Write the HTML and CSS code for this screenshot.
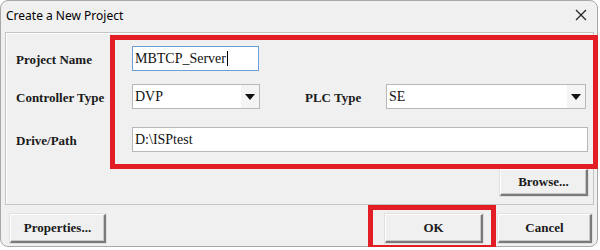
FILE: index.html
```html
<!DOCTYPE html>
<html>
<head>
<meta charset="utf-8">
<link rel="stylesheet" href="styles.css">
</head>
<body>
<div class="window">
  <div class="titlebar">
    <span class="title">Create a New Project</span>
    <svg class="close" width="12" height="12" viewBox="0 0 12 12"><path d="M1 1L11 11M11 1L1 11" stroke="#222" stroke-width="1.2" fill="none"/></svg>
  </div>
  <div class="group">
    <div class="row row1">
      <div class="label">Project Name</div>
      <div class="textbox focus name">MBTCP_Server<span class="caret"></span></div>
    </div>
    <div class="row row2">
      <div class="label">Controller Type</div>
      <div class="combo ctype"><span class="val">DVP</span><span class="drop"><span class="tri"></span></span></div>
      <div class="label plc">PLC Type</div>
      <div class="combo ptype"><span class="val">SE</span><span class="drop"><span class="tri"></span></span></div>
    </div>
    <div class="row row3">
      <div class="label">Drive/Path</div>
      <div class="textbox path">D:\ISPtest</div>
    </div>
    <div class="row row4">
      <div class="btn browse">Browse...</div>
    </div>
  </div>
  <div class="bottom">
    <div class="btn props">Properties...</div>
    <div class="spacer"></div>
    <div class="btn ok">OK</div>
    <div class="btn cancel">Cancel</div>
  </div>
  <div class="hl hl1"></div>
  <div class="hl hl2"></div>
</div>
</body>
</html>
```
FILE: styles.css
```css
html, body {
  margin: 0;
  padding: 0;
  background: #ffffff;
}
.window {
  position: relative;
  box-sizing: border-box;
  width: 598px;
  height: 247px;
  background: #f0f0f0;
  border: 1px solid #a8a8a8;
  border-radius: 8px;
  font-family: "Liberation Serif", serif;
  font-weight: bold;
  font-size: 13px;
  color: #1a1a1a;
}
.titlebar {
  height: 30px;
  display: flex;
  align-items: center;
  padding: 0 10px 0 5px;
  font-family: "Noto Sans", "Open Sans", sans-serif;
  font-weight: normal;
  font-size: 12px;
  color: #000;
}
.title {
  flex: 1;
  margin-top: -2px;
}
.close {
  margin-top: -3px;
}
.group {
  box-sizing: border-box;
  margin: 1px 3px 0 4px;
  height: 173px;
  border: 1px solid #c4c4c4;
  box-shadow: inset 1px 1px 0 #ffffff;
  padding: 13px 5px 0 10px;
  display: flex;
  flex-direction: column;
}
.row {
  display: flex;
  align-items: center;
  height: 25px;
}
.row2 { margin-top: 13px; }
.row3 { margin-top: 18px; }
.row4 {
  margin-top: 17px;
  height: 27px;
  justify-content: flex-end;
}
.label {
  width: 116px;
  flex: none;
  padding-top: 2px;
}
.label.plc {
  width: 81px;
  margin-left: 45px;
}
.textbox, .combo {
  box-sizing: border-box;
  height: 25px;
  background: #ffffff;
  border: 1px solid #b8b8b8;
  display: flex;
  align-items: center;
  padding-left: 2px;
  font-weight: normal;
  font-size: 14px;
  color: #111;
}
.textbox.focus {
  border-color: #6c9fd6;
}
.name { width: 127px; }
.path { flex: 1; }
.caret {
  display: inline-block;
  width: 1px;
  height: 15px;
  background: #000;
  margin-left: 1px;
}
.combo {
  padding-left: 2px;
  padding-right: 0;
}
.ctype { width: 128px; }
.ptype { width: 200px; }
.val { flex: 1; padding-top: 1px; }
.drop {
  width: 18px;
  height: 23px;
  display: flex;
  align-items: center;
  justify-content: center;
  background: #f4f4f4;
}
.tri {
  width: 0;
  height: 0;
  border-left: 5px solid transparent;
  border-right: 5px solid transparent;
  border-top: 6px solid #111;
}
.btn {
  box-sizing: border-box;
  display: flex;
  align-items: center;
  justify-content: center;
  background: #f0f0f0;
  border-top: 1px solid #ffffff;
  border-left: 1px solid #ffffff;
  border-right: 2px solid #7a7a7a;
  border-bottom: 2px solid #7a7a7a;
  box-shadow: inset -1px -1px 0 #c8c8c8, 0 0 0 1px #e0e0e0;
  font-size: 13px;
  color: #1a1a1a;
}
.browse {
  width: 88px;
  height: 27px;
}
.bottom {
  display: flex;
  margin: 9px 0 0 9px;
  padding-right: 5px;
  height: 29px;
}
.spacer { flex: 1; }
.props { width: 96px; height: 29px; }
.ok { width: 98px; height: 29px; margin-right: 15px; }
.cancel { width: 94px; height: 29px; }
.hl {
  position: absolute;
  box-sizing: border-box;
  border: 5px solid #e21d25;
}
.hl1 {
  left: 109px;
  top: 34px;
  width: 488px;
  height: 134px;
}
.hl2 {
  left: 367px;
  top: 204px;
  width: 128px;
  height: 45px;
}
```
